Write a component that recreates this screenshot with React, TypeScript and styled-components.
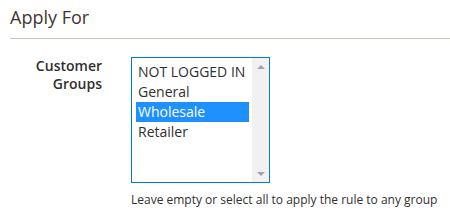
import React from "react";
import styled, { createGlobalStyle } from "styled-components";

const Global = createGlobalStyle`
  html, body { margin: 0; padding: 0; background: #ffffff; }
  body { font-family: "Open Sans", "Liberation Sans", sans-serif; color: #303030; }
  * { box-sizing: border-box; }
`;

const Page = styled.div`
  padding-left: 10px;
  width: 450px;
`;

const Title = styled.h2`
  margin: 0;
  padding: 7px 0 11px;
  font-size: 18px;
  line-height: 20px;
  font-weight: 400;
  color: #41362f;
  border-bottom: 1px solid #cac3b4;
`;

const Field = styled.div`
  display: grid;
  grid-template-columns: 92px 139px;
  column-gap: 29px;
  margin-top: 18px;
`;

const Label = styled.label`
  text-align: right;
  font-size: 14px;
  line-height: 18px;
  font-weight: 600;
  color: #303030;
`;

const Control = styled.div`
  display: flex;
  flex-direction: column;
`;

const ListBox = styled.div`
  display: flex;
  width: 139px;
  height: 126px;
  border: 1px solid #007bdb;
  background: #ffffff;
`;

const Options = styled.div`
  flex: 1;
  padding: 4px 3px 4px 4px;
  display: flex;
  flex-direction: column;
`;

const Option = styled.div<{ $selected?: boolean }>`
  height: 20px;
  line-height: 20px;
  font-size: 14px;
  padding-left: 2px;
  white-space: nowrap;
  overflow: hidden;
  color: ${(p) => (p.$selected ? "#ffffff" : "#303030")};
  background: ${(p) => (p.$selected ? "#1e90ff" : "transparent")};
`;

const Scrollbar = styled.div`
  width: 17px;
  background: #f1f1f1;
  display: flex;
  flex-direction: column;
  justify-content: space-between;
`;

const ScrollButton = styled.div<{ $dir: "up" | "down" }>`
  height: 17px;
  display: flex;
  align-items: center;
  justify-content: center;
  &::before {
    content: "";
    width: 0;
    height: 0;
    border-left: 4px solid transparent;
    border-right: 4px solid transparent;
    ${(p) =>
      p.$dir === "up"
        ? "border-bottom: 4px solid #a3a3a3;"
        : "border-top: 4px solid #a3a3a3;"}
  }
`;

const Note = styled.div`
  margin-top: 9px;
  font-size: 12px;
  line-height: 16px;
  color: #303030;
  white-space: nowrap;
`;

const groups = [
  { name: "NOT LOGGED IN", selected: false },
  { name: "General", selected: false },
  { name: "Wholesale", selected: true },
  { name: "Retailer", selected: false },
];

export default function App() {
  return (
    <>
      <Global />
      <Page>
        <Title>Apply For</Title>
        <Field>
          <Label>
            Customer
            <br />
            Groups
          </Label>
          <Control>
            <ListBox>
              <Options>
                {groups.map((g) => (
                  <Option key={g.name} $selected={g.selected}>
                    {g.name}
                  </Option>
                ))}
              </Options>
              <Scrollbar>
                <ScrollButton $dir="up" />
                <ScrollButton $dir="down" />
              </Scrollbar>
            </ListBox>
            <Note>Leave empty or select all to apply the rule to any group</Note>
          </Control>
        </Field>
      </Page>
    </>
  );
}
